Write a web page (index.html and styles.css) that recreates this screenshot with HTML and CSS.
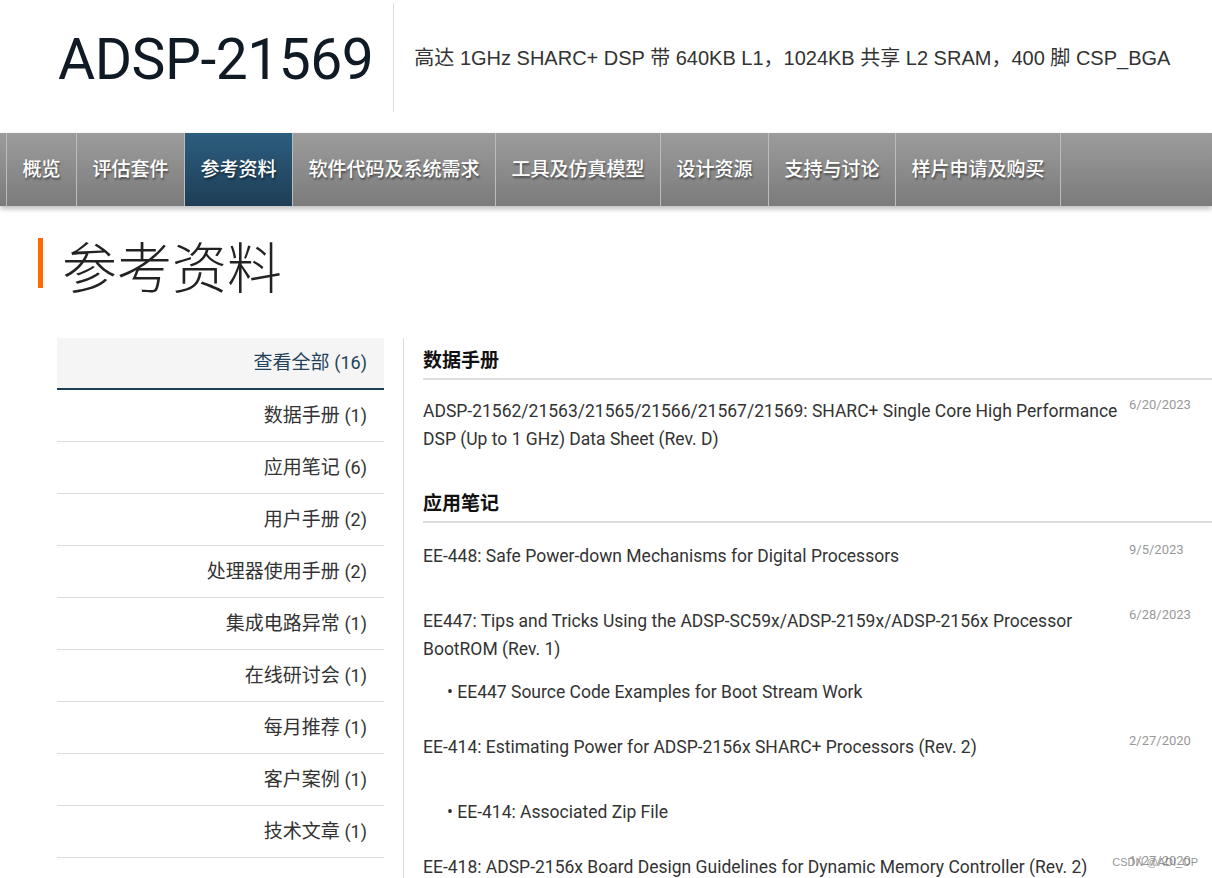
FILE: index.html
```html
<!DOCTYPE html>
<html lang="zh-CN">
<head>
<meta charset="utf-8">
<title>ADSP-21569 参考资料</title>
<link rel="stylesheet" href="styles.css">
</head>
<body>
<header class="hdr">
  <h1 class="hdr-title">ADSP-21569</h1>
  <p class="hdr-sub">高达 1GHz SHARC+ DSP 带 640KB L1，1024KB 共享 L2 SRAM，400 脚 CSP_BGA</p>
</header>
<nav class="nav">
  <a class="nav-item">概览</a>
  <a class="nav-item">评估套件</a>
  <a class="nav-item nav-item--active">参考资料</a>
  <a class="nav-item">软件代码及系统需求</a>
  <a class="nav-item">工具及仿真模型</a>
  <a class="nav-item">设计资源</a>
  <a class="nav-item">支持与讨论</a>
  <a class="nav-item nav-item--last">样片申请及购买</a>
</nav>
<h2 class="page-title">参考资料</h2>
<div class="layout">
  <aside class="side">
    <a class="side-item side-item--active">查看全部 <span class="num">(16)</span></a>
    <a class="side-item">数据手册 <span class="num">(1)</span></a>
    <a class="side-item">应用笔记 <span class="num">(6)</span></a>
    <a class="side-item">用户手册 <span class="num">(2)</span></a>
    <a class="side-item">处理器使用手册 <span class="num">(2)</span></a>
    <a class="side-item">集成电路异常 <span class="num">(1)</span></a>
    <a class="side-item">在线研讨会 <span class="num">(1)</span></a>
    <a class="side-item">每月推荐 <span class="num">(1)</span></a>
    <a class="side-item">客户案例 <span class="num">(1)</span></a>
    <a class="side-item">技术文章 <span class="num">(1)</span></a>
  </aside>
  <main class="main">
    <section class="sec">
      <h3 class="sec-head">数据手册</h3>
      <div class="doc">
        <div class="doc-body">
          <p class="doc-title">ADSP-21562/21563/21565/21566/21567/21569: SHARC+ Single Core High Performance DSP (Up to 1 GHz) Data Sheet (Rev. D)</p>
        </div>
        <span class="doc-date">6/20/2023</span>
      </div>
    </section>
    <section class="sec">
      <h3 class="sec-head">应用笔记</h3>
      <div class="doc">
        <div class="doc-body">
          <p class="doc-title">EE-448: Safe Power-down Mechanisms for Digital Processors</p>
        </div>
        <span class="doc-date">9/5/2023</span>
      </div>
      <div class="doc">
        <div class="doc-body">
          <p class="doc-title">EE447: Tips and Tricks Using the ADSP-SC59x/ADSP-2159x/ADSP-2156x Processor BootROM (Rev. 1)</p>
          <ul class="doc-subs">
            <li>EE447 Source Code Examples for Boot Stream Work</li>
          </ul>
        </div>
        <span class="doc-date">6/28/2023</span>
      </div>
      <div class="doc">
        <div class="doc-body">
          <p class="doc-title">EE-414: Estimating Power for ADSP-2156x SHARC+ Processors (Rev. 2)</p>
          <ul class="doc-subs doc-subs--loose">
            <li>EE-414: Associated Zip File</li>
          </ul>
        </div>
        <span class="doc-date">2/27/2020</span>
      </div>
      <div class="doc">
        <div class="doc-body">
          <p class="doc-title">EE-418: ADSP-2156x Board Design Guidelines for Dynamic Memory Controller (Rev. 2)</p>
        </div>
        <span class="doc-date">1/27/2020</span>
      </div>
    </section>
  </main>
</div>
<div class="watermark">CSDN @ADI_OP</div>
</body>
</html>
```
FILE: styles.css
```css
* { box-sizing: border-box; }
html, body { margin: 0; padding: 0; }
body {
  width: 1212px;
  height: 878px;
  overflow: hidden;
  position: relative;
  background: #fff;
  color: #333;
  font-family: Roboto, "Noto Sans CJK SC", sans-serif;
}
p, h1, h2, h3, ul { margin: 0; padding: 0; }

/* header */
.hdr {
  display: flex;
  align-items: center;
  height: 133px;
  padding: 3px 0 21px 58px;
}
.hdr-title {
  font-family: Roboto, "Noto Sans CJK SC", sans-serif;
  font-weight: 400;
  font-size: 57px;
  letter-spacing: -0.5px;
  color: #101a24;
  height: 109px;
  line-height: 114px;
  padding-right: 20px;
  border-right: 1px solid #ddd;
}
.hdr-sub {
  padding-left: 20px;
  font-family: "Liberation Sans", "Noto Sans CJK SC", sans-serif;
  font-size: 20px;
  color: #333;
  margin-top: -2px;
}

/* nav */
.nav {
  display: flex;
  height: 73px;
  padding-left: 6px;
  background: linear-gradient(#9c9c9c, #7b7b7b);
  box-shadow: 0 3px 5px rgba(0,0,0,0.25);
}
.nav-item {
  display: flex;
  align-items: center;
  padding: 0 15.5px 4px 15.5px;
  border-left: 1px solid #bdbdbd;
  color: #fff;
  font-family: "Noto Sans CJK SC", sans-serif;
  font-size: 19px;
  font-weight: 500;
  text-shadow: 1px 2px 2px rgba(0,0,0,0.45);
  white-space: nowrap;
}
.nav-item--active {
  background: linear-gradient(#2c5d7e, #1e3e56);
}
.nav-item--last { border-right: 1px solid #bdbdbd; }

/* page title */
.page-title {
  display: flex;
  align-items: flex-start;
  margin: 26px 0 0 38px;
  font-family: "Noto Sans CJK SC", sans-serif;
  font-weight: 300;
  font-size: 55px;
  line-height: 64px;
  color: #222;
}
.page-title::before {
  content: "";
  width: 5px;
  height: 50px;
  margin-top: 6px;
  margin-right: 19px;
  background: #ff6a00;
}

/* layout */
.layout {
  display: flex;
  align-items: flex-start;
  margin-top: 42px;
  padding-left: 57px;
}
.side {
  width: 327px;
  flex: none;
  display: flex;
  flex-direction: column;
}
.side-item {
  display: block;
  height: 52px;
  line-height: 51px;
  padding-right: 17px;
  text-align: right;
  font-size: 19px;
  color: #333;
  border-bottom: 1px solid #ddd;
}
.side-item--active {
  background: #f5f5f5;
  color: #23425a;
  border-bottom: 2px solid #1f3d54;
  line-height: 50px;
}
.num { font-size: 18px; }

.main {
  margin-left: 19px;
  border-left: 1px solid #ddd;
  padding: 7px 0 0 19px;
  flex: 1;
  min-height: 600px;
}
.sec + .sec { margin-top: 15px; }
.sec-head {
  font-family: "Noto Sans CJK SC", sans-serif;
  font-size: 19px;
  font-weight: 700;
  line-height: 28px;
  color: #111;
  padding-bottom: 5px;
  border-bottom: 2px solid #ddd;
}
.sec + .sec .sec-head { margin-bottom: 2px; }
.doc {
  display: flex;
  align-items: flex-start;
  padding: 17px 0 10px;
}
.doc-body {
  width: 706px;
  flex: none;
}
.doc-title {
  font-size: 17.5px;
  line-height: 28px;
  color: #333;
  margin-bottom: 10px;
}
.doc-subs {
  list-style: none;
  margin-top: 15px;
  margin-bottom: 0;
  padding-left: 24px;
}
.doc-subs--loose { margin-top: 37px; }
.doc-subs li {
  font-size: 17.5px;
  line-height: 28px;
  color: #333;
}
.doc-subs li::before { content: "\2022\00a0"; }
.doc-date {
  flex: none;
  width: 83px;
  font-size: 13px;
  line-height: 15px;
  color: #999;
}

.watermark {
  position: absolute;
  right: 14px;
  bottom: 10px;
  font-family: "Liberation Sans", sans-serif;
  font-size: 11px;
  color: rgba(120,120,120,0.8);
}
```
